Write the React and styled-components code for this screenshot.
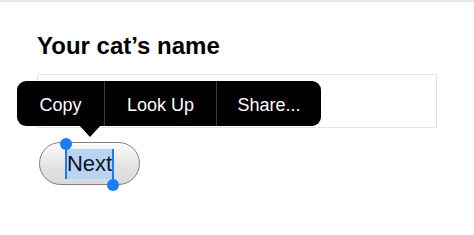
import React from "react";
import styled, { createGlobalStyle } from "styled-components";

const GlobalStyle = createGlobalStyle`
  html, body { margin: 0; padding: 0; background: #fff; }
  body { font-family: "Liberation Sans", Arial, Helvetica, sans-serif; }
`;

const Page = styled.div`
  position: relative;
  width: 474px;
  height: 235px;
  border-top: 2px solid #e6e6e6;
  box-sizing: border-box;
  overflow: hidden;
`;

const Content = styled.div`
  padding: 30px 37px 0;
  display: flex;
  flex-direction: column;
  align-items: flex-start;
`;

const Heading = styled.h2`
  margin: 0;
  font-size: 24px;
  line-height: 28px;
  font-weight: 700;
  color: #000;
`;

const TextField = styled.div`
  margin-top: 14px;
  width: 400px;
  height: 54px;
  box-sizing: border-box;
  border: 1px solid #e4e4e4;
  background: #fff;
`;

const PillButton = styled.div`
  margin: 14px 0 0 2px;
  width: 101px;
  height: 43px;
  box-sizing: border-box;
  border-radius: 22px;
  border: 1px solid #7f7f7f;
  background: linear-gradient(#fbfbfb, #e2e2e2 60%, #d9d9d9);
  box-shadow: inset 0 1px 0 #ffffff;
  display: flex;
  align-items: center;
  justify-content: center;
`;

const Selection = styled.span`
  position: relative;
  display: inline-block;
  padding: 0 1px;
  height: 30px;
  font-size: 22px;
  line-height: 30px;
  color: #0b1424;
  background: #b9d4f3;
`;

const Caret = styled.span`
  position: absolute;
  width: 2px;
  background: #1a7cf6;
  ${(p) =>
    p.$start
      ? `left: -1px; top: -5px; bottom: 0;`
      : `right: -1px; top: 0; bottom: -6px;`}

  &::after {
    content: "";
    position: absolute;
    left: -5px;
    width: 12px;
    height: 12px;
    border-radius: 50%;
    background: #1a7cf6;
    ${(p) => (p.$start ? `top: -6px;` : `bottom: -6px;`)}
  }
`;

const Menu = styled.div`
  position: absolute;
  left: 17px;
  top: 79px;
  height: 45px;
  display: flex;
  background: #000;
  border-radius: 9px;
  color: #fff;
`;

const MenuItem = styled.div`
  width: ${(p) => p.$w}px;
  box-sizing: border-box;
  padding-top: 14px;
  text-align: center;
  font-size: 18px;
  line-height: 20px;
  & + & {
    border-left: 1px solid #3a3a3a;
  }
`;

const Arrow = styled.div`
  position: absolute;
  left: 62px;
  bottom: -11px;
  width: 0;
  height: 0;
  border-left: 11px solid transparent;
  border-right: 11px solid transparent;
  border-top: 12px solid #000;
`;

export default function App() {
  return (
    <>
      <GlobalStyle />
      <Page>
        <Content>
          <Heading>Your cat’s name</Heading>
          <TextField />
          <PillButton>
            <Selection>
              <Caret $start />
              Next
              <Caret />
            </Selection>
          </PillButton>
        </Content>
        <Menu>
          <MenuItem $w={87}>Copy</MenuItem>
          <MenuItem $w={112}>Look Up</MenuItem>
          <MenuItem $w={105}>Share...</MenuItem>
          <Arrow />
        </Menu>
      </Page>
    </>
  );
}
